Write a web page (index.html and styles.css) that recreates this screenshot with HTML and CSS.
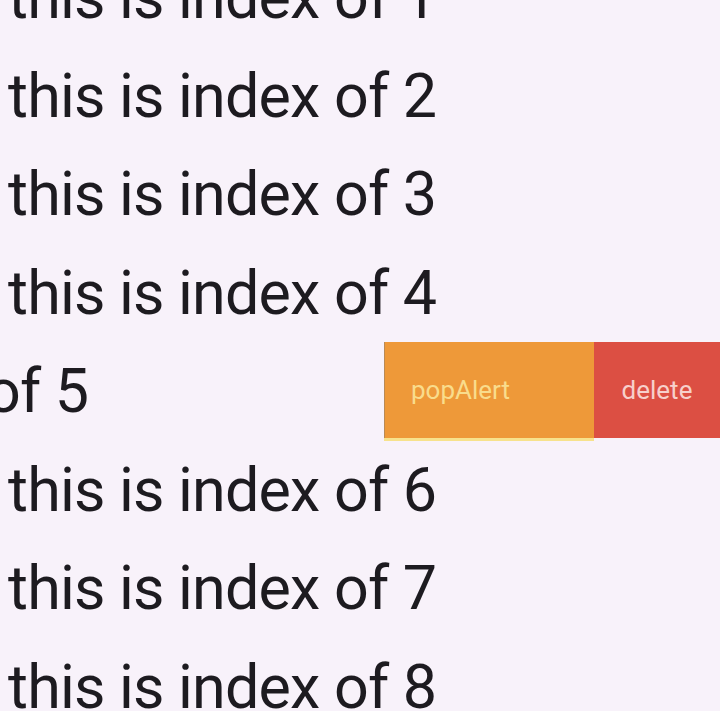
FILE: index.html
```html
<!DOCTYPE html>
<html lang="en">
<head>
  <meta charset="UTF-8" />
  <title>Slidable List</title>
  <link rel="stylesheet" href="styles.css">
</head>
<body>
<div class="list">
  <div class="row"><span class="row-text">this is index of 1</span></div>
  <div class="row"><span class="row-text">this is index of 2</span></div>
  <div class="row"><span class="row-text">this is index of 3</span></div>
  <div class="row"><span class="row-text">this is index of 4</span></div>
  <div class="row swiped">
    <span class="row-text">this is index of 5</span>
    <div class="actions">
      <div class="action pop">popAlert</div>
      <div class="action delete">delete</div>
    </div>
  </div>
  <div class="row"><span class="row-text">this is index of 6</span></div>
  <div class="row"><span class="row-text">this is index of 7</span></div>
  <div class="row"><span class="row-text">this is index of 8</span></div>
</div>
</body>
</html>
```

FILE: styles.css
```css
html, body {
  margin: 0;
  height: 100%;
  overflow: hidden;
}

body {
  background-color: #f8f2fa;
  font-family: Roboto, 'Noto Sans', sans-serif;
  color: #1d1b20;
}

.list {
  margin-top: -52px;
}

.row {
  position: relative;
  height: 98.5px;
  display: flex;
  align-items: center;
  padding-left: 8px;
  overflow: hidden;
}

.row-text {
  font-size: 61px;
  letter-spacing: -0.8px;
  white-space: nowrap;
}

.swiped .row-text {
  transform: translateX(-348px);
}

.actions {
  position: absolute;
  top: 0;
  right: 0;
  height: 96px;
  display: flex;
}

.action {
  display: flex;
  align-items: center;
  font-size: 26px;
}

.pop {
  width: 183px;
  padding-left: 26px;
  background-color: #ee9939;
  color: #f9dc8c;
  border-left: 1px solid #b98a55;
  box-shadow: 0 3px 0 #f7e28c;
}

.delete {
  width: 126px;
  justify-content: center;
  background-color: #dc4f43;
  color: #f7d0cb;
}
```
